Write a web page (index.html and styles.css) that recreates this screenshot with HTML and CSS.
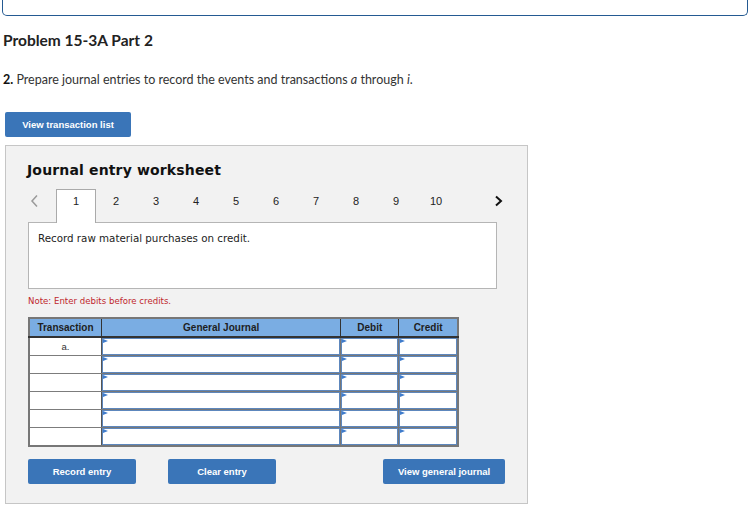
FILE: index.html
```html
<!DOCTYPE html>
<html>
<head>
<meta charset="utf-8">
<link rel="stylesheet" href="styles.css">
</head>
<body>
<div class="topbox"></div>
<h2 class="title">Problem 15-3A Part 2</h2>
<p class="intro"><b>2.</b> Prepare journal entries to record the events and transactions <i>a</i> through <i>i</i>.</p>
<button class="btn btn-list">View transaction list</button>

<div class="panel">
  <h3 class="ws-title">Journal entry worksheet</h3>
  <div class="tabs">
    <span class="arrow prev">
      <svg width="9" height="14" viewBox="0 0 9 14"><path d="M7 1.5 L2 7 L7 12.5" fill="none" stroke="#9a9a9a" stroke-width="1.5"/></svg>
    </span>
    <span class="tab active">1</span>
    <span class="tab">2</span>
    <span class="tab">3</span>
    <span class="tab">4</span>
    <span class="tab">5</span>
    <span class="tab">6</span>
    <span class="tab">7</span>
    <span class="tab">8</span>
    <span class="tab">9</span>
    <span class="tab">10</span>
    <span class="arrow next">
      <svg width="9" height="12" viewBox="0 0 9 12"><path d="M2 1.5 L7 6 L2 10.5" fill="none" stroke="#111" stroke-width="2"/></svg>
    </span>
  </div>
  <div class="desc">Record raw material purchases on credit.</div>
  <div class="note">Note: Enter debits before credits.</div>

  <table class="journal">
    <thead>
      <tr><th class="c-tr">Transaction</th><th class="c-gj">General Journal</th><th class="c-dr">Debit</th><th class="c-cr">Credit</th></tr>
    </thead>
    <tbody>
      <tr><td class="tr">a.</td><td class="in"><div class="box"></div></td><td class="in"><div class="box"></div></td><td class="in"><div class="box"></div></td></tr>
      <tr><td class="tr"></td><td class="in"><div class="box"></div></td><td class="in"><div class="box"></div></td><td class="in"><div class="box"></div></td></tr>
      <tr><td class="tr"></td><td class="in"><div class="box"></div></td><td class="in"><div class="box"></div></td><td class="in"><div class="box"></div></td></tr>
      <tr><td class="tr"></td><td class="in"><div class="box"></div></td><td class="in"><div class="box"></div></td><td class="in"><div class="box"></div></td></tr>
      <tr><td class="tr"></td><td class="in"><div class="box"></div></td><td class="in"><div class="box"></div></td><td class="in"><div class="box"></div></td></tr>
      <tr><td class="tr"></td><td class="in"><div class="box"></div></td><td class="in"><div class="box"></div></td><td class="in"><div class="box"></div></td></tr>
    </tbody>
  </table>

  <div class="actions">
    <button class="btn btn-rec">Record entry</button>
    <button class="btn btn-clr">Clear entry</button>
    <button class="btn btn-view">View general journal</button>
  </div>
</div>
</body>
</html>
```

FILE: styles.css
```css
html, body {
  margin: 0;
  padding: 0;
  background: #fff;
}
body {
  width: 752px;
  height: 527px;
  overflow: hidden;
  font-family: "Lato", "Liberation Sans", sans-serif;
  color: #222;
}
.topbox {
  margin: -4px 0 0 2px;
  width: 744px;
  height: 19px;
  border: 1.5px solid #245a92;
  border-top: none;
  border-radius: 0 0 5px 5px;
}
.title {
  margin: 15px 0 0 3px;
  font-size: 15.5px;
  font-weight: 700;
  line-height: 18px;
  color: #222;
}
.intro {
  margin: 23px 0 0 3px;
  font-size: 12.5px;
  line-height: 16px;
  color: #333;
}
.intro b { color: #111; }
.btn {
  display: block;
  border: none;
  border-radius: 2px;
  background: #3a75b8;
  color: #fff;
  font-family: "Liberation Sans", Arial, sans-serif;
  font-weight: 700;
  font-size: 9.5px;
  height: 25px;
  padding: 0;
  cursor: pointer;
}
.btn-list {
  margin: 24px 0 0 5px;
  width: 126px;
}
.panel {
  margin: 8px 0 0 5px;
  width: 523px;
  height: 359px;
  background: #f2f2f2;
  border: 1px solid #c6c6c6;
  box-sizing: border-box;
  font-family: "DejaVu Sans", Verdana, sans-serif;
}
.ws-title {
  margin: 15px 0 0 21px;
  font-size: 14px;
  font-weight: 700;
  line-height: 18px;
  color: #111;
  letter-spacing: 0.15px;
}
.tabs {
  margin: 10px 0 0 22px;
  display: flex;
  align-items: stretch;
  height: 33px;
  font-family: "Liberation Sans", Arial, sans-serif;
  font-size: 11px;
  color: #222;
}
.tab {
  width: 40px;
  display: flex;
  align-items: flex-start;
  justify-content: center;
  box-sizing: border-box;
  padding-top: 6px;
}
.tab.active {
  background: #fff;
  border: 1px solid #aaa;
  border-bottom: none;
  height: 34px;
  padding-top: 5px;
  position: relative;
  z-index: 1;
}
.arrow {
  display: flex;
  align-items: flex-start;
  padding-top: 5px;
  box-sizing: border-box;
}
.arrow.prev {
  width: 28px;
  padding-left: 2px;
}
.arrow.next {
  margin-left: 38px;
  width: 10px;
  padding-top: 6px;
}
.desc {
  margin: 0 0 0 22px;
  width: 469px;
  height: 67px;
  box-sizing: border-box;
  background: #fff;
  border: 1px solid #b5b5b5;
  padding: 9px 0 0 9px;
  font-size: 10.3px;
  color: #222;
}
.note {
  margin: 6px 0 0 22px;
  font-size: 8.6px;
  color: #c0282d;
  line-height: 12px;
}
.journal {
  margin: 10px 0 0 22px;
  border-collapse: collapse;
  width: 431px;
  border: 2px solid #777;
  font-family: "Liberation Sans", Arial, sans-serif;
}
.journal th {
  background: #7aade3;
  height: 17px;
  font-size: 10px;
  font-weight: 700;
  color: #1e1e1e;
  border-right: 1.5px solid #333;
  border-bottom: 2px solid #333;
  padding: 0;
}
.journal th:last-child { border-right: none; }
.c-tr { width: 71px; }
.c-gj { width: 240px; }
.c-dr { width: 57px; }
.c-cr { width: 58px; }
.journal td {
  height: 17px;
  padding: 0;
  border: 1px solid #7c7c7c;
  background: #fff;
}
.journal td.tr {
  text-align: center;
  font-size: 9.5px;
  color: #333;
  vertical-align: top;
  padding-top: 3px;
  height: 14px;
  border-right: 1.5px solid #555;
}
.journal td.in {
  position: relative;
  border: 1px solid #777;
}
.box {
  position: absolute;
  left: 0;
  right: 0;
  top: 0;
  bottom: 0;
  border: 1.5px solid #5d87bd;
  background: #fff;
}
.box::before {
  content: "";
  position: absolute;
  left: 0;
  top: 0;
  border-left: 5px solid #3f7ccc;
  border-top: 2.5px solid transparent;
  border-bottom: 2.5px solid transparent;
}
.actions {
  margin: 12px 0 0 22px;
  display: flex;
}
.btn-rec { width: 108px; }
.btn-clr { width: 108px; margin-left: 32px; }
.btn-view { width: 122px; margin-left: 107px; }
```
